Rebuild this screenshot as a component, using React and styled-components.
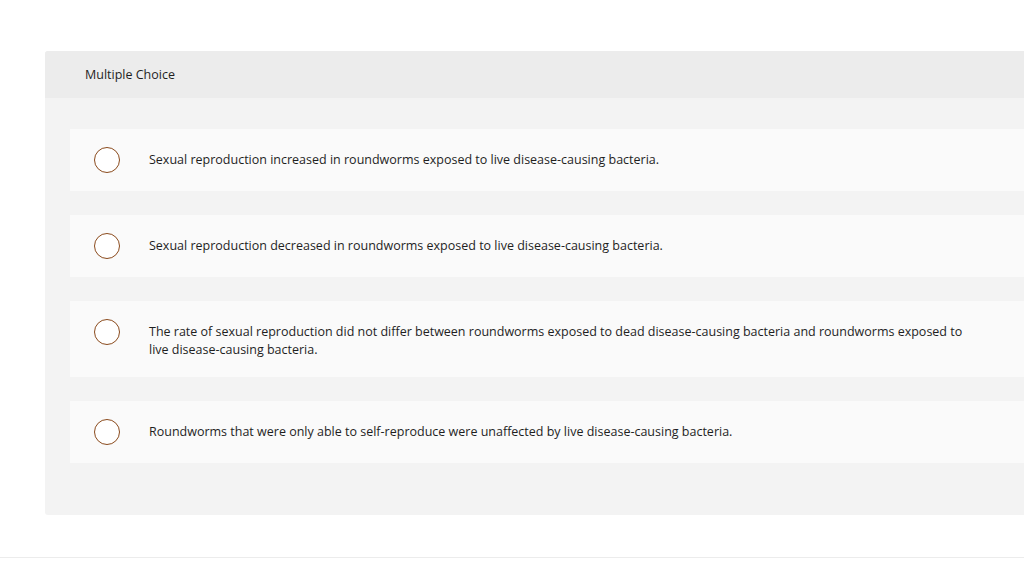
import React from 'react';
import styled, { createGlobalStyle } from 'styled-components';

const GlobalStyle = createGlobalStyle`
  html, body {
    margin: 0;
    padding: 0;
    background: #ffffff;
    overflow: hidden;
  }
  body {
    font-family: "Open Sans", Lato, Arial, sans-serif;
    color: #222;
  }
`;

const Page = styled.div`
  width: 1024px;
  height: 565px;
  padding-top: 51px;
  box-sizing: border-box;
  overflow: hidden;
`;

const Panel = styled.section`
  margin-left: 45px;
  width: 1010px;
  background: #f3f3f3;
  border-radius: 3px;
  overflow: hidden;
  padding-bottom: 52px;
`;

const Header = styled.div`
  height: 47px;
  background: #ececec;
  display: flex;
  align-items: center;
  padding-left: 40px;
  font-size: 12.5px;
  color: #1f1f1f;
`;

const Options = styled.div`
  display: flex;
  flex-direction: column;
  gap: 24px;
  padding: 31px 0 0 25px;
`;

const Option = styled.label`
  display: flex;
  align-items: flex-start;
  background: #fafafa;
  padding: 18px 0 18px 24px;
  cursor: pointer;
`;

const Radio = styled.span`
  flex: none;
  width: 26px;
  height: 26px;
  border-radius: 50%;
  border: 1px solid #8a4a1c;
  background: #fff;
  box-sizing: border-box;
`;

const Text = styled.span`
  margin: 4px 0 0 29px;
  max-width: 822px;
  font-size: 12.5px;
  line-height: 18px;
  color: #1f1f1f;
`;

const Footer = styled.div`
  margin-top: 42px;
  border-top: 1px solid #ececec;
`;

const choices = [
  'Sexual reproduction increased in roundworms exposed to live disease-causing bacteria.',
  'Sexual reproduction decreased in roundworms exposed to live disease-causing bacteria.',
  'The rate of sexual reproduction did not differ between roundworms exposed to dead disease-causing bacteria and roundworms exposed to live disease-causing bacteria.',
  'Roundworms that were only able to self-reproduce were unaffected by live disease-causing bacteria.',
];

export default function App() {
  return (
    <Page>
      <GlobalStyle />
      <Panel>
        <Header>Multiple Choice</Header>
        <Options>
          {choices.map((c, i) => (
            <Option key={i}>
              <Radio />
              <Text>{c}</Text>
            </Option>
          ))}
        </Options>
      </Panel>
      <Footer />
    </Page>
  );
}
